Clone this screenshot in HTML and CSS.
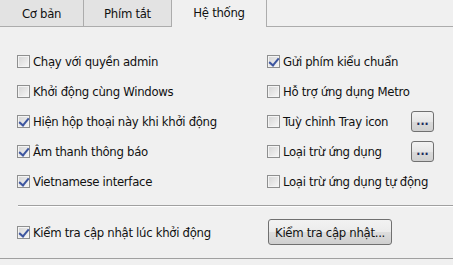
FILE: index.html
```html
<!DOCTYPE html>
<html lang="vi">
<head>
  <meta charset="UTF-8" />
  <title>Cài đặt - Hệ thống</title>
  <link rel="stylesheet" href="styles.css">
</head>
<body>

  <div class="tabs">
    <div class="tab tab-basic">Cơ bản</div>
    <div class="tab tab-keys">Phím tắt</div>
    <div class="tab tab-system active">Hệ thống</div>
    <div class="tab-fill"></div>
  </div>

  <div class="panel">
    <div class="options">
      <label class="opt"><span class="box"></span>Chạy với quyền admin</label>
      <label class="opt"><span class="box checked"></span>Gửi phím kiểu chuẩn</label>

      <label class="opt"><span class="box"></span>Khởi động cùng Windows</label>
      <label class="opt"><span class="box"></span>Hỗ trợ ứng dụng Metro</label>

      <label class="opt"><span class="box checked"></span>Hiện hộp thoại này khi khởi động</label>
      <div class="opt-row">
        <label class="opt"><span class="box"></span>Tuỳ chỉnh Tray icon</label>
        <button class="dots-btn">...</button>
      </div>

      <label class="opt"><span class="box checked"></span>Âm thanh thông báo</label>
      <div class="opt-row">
        <label class="opt"><span class="box"></span>Loại trừ ứng dụng</label>
        <button class="dots-btn">...</button>
      </div>

      <label class="opt"><span class="box checked"></span>Vietnamese interface</label>
      <label class="opt"><span class="box"></span>Loại trừ ứng dụng tự động</label>
    </div>

    <div class="separator"></div>

    <div class="update">
      <label class="opt"><span class="box checked"></span>Kiểm tra cập nhật lúc khởi động</label>
      <button class="update-btn">Kiểm tra cập nhật...</button>
    </div>
  </div>

</body>
</html>
```

FILE: styles.css
```css
* {
  margin: 0;
  padding: 0;
  box-sizing: border-box;
}

body {
  width: 453px;
  height: 265px;
  overflow: hidden;
  background: #f0f0f0;
  font-family: 'DejaVu Sans Condensed', 'DejaVu Sans', Tahoma, sans-serif;
  font-size: 13px;
  letter-spacing: -0.3px;
  color: #111;
}

/* tab strip */
.tabs {
  display: flex;
  height: 27px;
}

.tab {
  display: flex;
  align-items: center;
  justify-content: center;
  height: 27px;
  background: #e3e3e3;
  border-right: 1px solid #acacac;
  border-bottom: 1px solid #acacac;
}

.tab-basic { width: 84px; }
.tab-keys { width: 88px; }
.tab-system { width: 95px; }

.tab.active {
  background: #f0f0f0;
  border-bottom: none;
  padding-bottom: 2px;
}

.tab-fill {
  flex: 1;
  border-bottom: 1px solid #acacac;
}

/* options */
.panel {
  padding-top: 19px;
  border-bottom: 1px solid #a0a0a0;
}

.options {
  display: grid;
  grid-template-columns: 250px 167px;
  grid-auto-rows: 30px;
  padding-left: 17px;
}

.opt {
  display: flex;
  align-items: center;
  gap: 3px;
  white-space: nowrap;
}

.opt-row {
  display: flex;
  align-items: center;
  justify-content: space-between;
}

.box {
  flex: none;
  width: 13px;
  height: 13px;
  border: 1px solid #8e8f8f;
  background: linear-gradient(135deg, #d4d4d4, #f7f7f7);
  box-shadow: inset 0 0 0 1px #f4f4f4;
  position: relative;
}

.box.checked::after {
  content: "";
  position: absolute;
  left: 3px;
  top: 0px;
  width: 4px;
  height: 8px;
  border-right: 2px solid #3d56a0;
  border-bottom: 2px solid #3d56a0;
  transform: rotate(40deg);
}

.dots-btn {
  width: 23px;
  height: 21px;
  border: 1px solid #707070;
  border-radius: 3px;
  background: linear-gradient(#f2f2f2, #e6e6e6 50%, #dadada 51%, #d0d0d0);
  font-family: inherit;
  font-size: 12px;
  font-weight: bold;
  color: #1b2a5a;
  line-height: 14px;
}

.separator {
  margin: 9px 0 0 18px;
  height: 2px;
  border-top: 1px solid #a0a0a0;
  border-bottom: 1px solid #fff;
}

.update {
  display: grid;
  grid-template-columns: 251px 124px;
  align-items: center;
  padding: 12px 0 13px 17px;
}

.update-btn {
  height: 26px;
  border: 1px solid #707070;
  border-radius: 3px;
  background: linear-gradient(#f2f2f2, #ebebeb 50%, #dddddd 51%, #cfcfcf);
  font-family: inherit;
  font-size: 13px;
  letter-spacing: -0.3px;
  white-space: nowrap;
  color: #111;
}
```
